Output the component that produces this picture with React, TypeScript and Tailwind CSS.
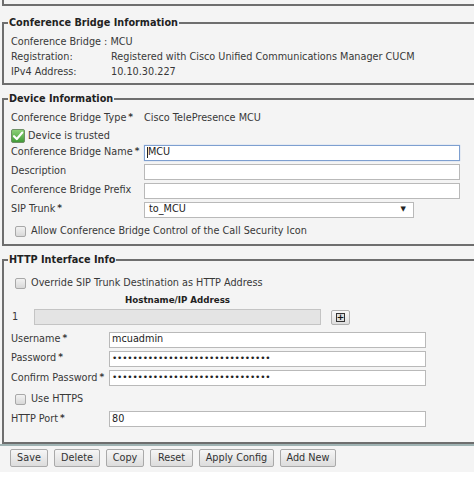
import React from 'react';

const font = { fontFamily: '"DejaVu Sans", Verdana, sans-serif' };

function Req() {
  return <sup className="ml-[2px] text-[9px] font-bold relative top-[-1px]">*</sup>;
}

function Box({ title, children, className = '' }: { title: string; children: React.ReactNode; className?: string }) {
  return (
    <fieldset className={`ml-[2px] w-[472px] border-2 border-r-0 border-[#6e6e6e] pl-[7px] ${className}`}>
      <legend className="-ml-[3px] px-[1px] text-[9.7px] leading-[13px] font-bold text-[#222]">{title}</legend>
      {children}
    </fieldset>
  );
}

function CheckBox() {
  return (
    <span className="inline-block w-[11px] h-[11px] rounded-[2px] border border-[#a8a8a8] bg-gradient-to-b from-[#f2f2f2] to-[#d8d8d8] ml-[4px] mr-[5px]" />
  );
}

function GreenCheck() {
  return (
    <svg width="14" height="14" viewBox="0 0 14 14" className="mr-[3px]">
      <defs>
        <linearGradient id="g" x1="0" y1="0" x2="0" y2="1">
          <stop offset="0" stopColor="#8fd37a" />
          <stop offset="1" stopColor="#3f9a35" />
        </linearGradient>
      </defs>
      <rect x="0.5" y="0.5" width="13" height="13" rx="1.5" fill="url(#g)" stroke="#6f8f66" />
      <path d="M3 7.2 L5.8 10 L11.2 3.6" fill="none" stroke="#fff" strokeWidth="2.2" strokeLinecap="round" strokeLinejoin="round" />
    </svg>
  );
}

function TextInput({ value = '', w, focus, password }: { value?: string; w: string; focus?: boolean; password?: boolean }) {
  return (
    <div
      className={`${w} h-[16px] bg-white border flex items-center px-[2px] ${
        focus ? 'border-[#7d9fd0] shadow-[0_0_1px_#9ab8e6]' : 'border-[#b9b9b9]'
      }`}
    >
      {focus && <span className="w-px h-[11px] bg-[#222]" />}
      <span className={password ? 'text-[9px] tracking-[-0.2px] text-[#222]' : 'text-[#222]'}>{value}</span>
    </div>
  );
}

const pw = '•••••••••••••••••••••••••••••••';

function Btn({ label, w }: { label: string; w: string }) {
  return (
    <button className={`${w} h-[18px] text-[9.7px] text-[#333] border border-[#a9a9a9] rounded-[2px] bg-gradient-to-b from-[#f6f6f6] to-[#dcdcdc] leading-none`}>
      {label}
    </button>
  );
}

export default function App() {
  return (
    <div className="w-[474px] h-[477px] overflow-hidden bg-white" style={font}>
      <div className="bg-[#f4f4f4] pb-[5px] text-[#383838] text-[9.7px]">
        {/* tail of the previous section */}
        <div className="ml-[2px] w-[472px] h-[6px] border-l-2 border-b-2 border-[#6e6e6e]" />

        <Box title="Conference Bridge Information" className="mt-[10px] pt-[6px] pb-[3px]">
          <div className="flex h-[15px] items-center">
            <span>Conference Bridge : MCU</span>
          </div>
          <div className="flex h-[15px] items-center">
            <span className="w-[100px]">Registration:</span>
            <span>Registered with Cisco Unified Communications Manager CUCM</span>
          </div>
          <div className="flex h-[15px] items-center">
            <span className="w-[100px]">IPv4 Address:</span>
            <span>10.10.30.227</span>
          </div>
        </Box>

        <Box title="Device Information" className="mt-[7px] pt-[5px] pb-[1px]">
          <div className="flex h-[16px] items-center">
            <span className="w-[133px]">
              Conference Bridge Type<Req />
            </span>
            <span>Cisco TelePresence MCU</span>
          </div>
          <div className="flex h-[17px] items-center pt-[3px]">
            <GreenCheck />
            <span>Device is trusted</span>
          </div>
          <div className="flex h-[19px] items-center">
            <span className="w-[133px]">
              Conference Bridge Name<Req />
            </span>
            <TextInput value="MCU" w="w-[316px]" focus />
          </div>
          <div className="flex h-[19px] items-center">
            <span className="w-[133px]">Description</span>
            <TextInput w="w-[316px]" />
          </div>
          <div className="flex h-[19px] items-center">
            <span className="w-[133px]">Conference Bridge Prefix</span>
            <TextInput w="w-[316px]" />
          </div>
          <div className="flex h-[19px] items-center">
            <span className="w-[133px]">
              SIP Trunk<Req />
            </span>
            <div className="w-[270px] h-[16px] bg-white border border-[#b9b9b9] flex items-center justify-between pl-[4px] pr-[7px]">
              <span className="text-[#222]">to_MCU</span>
              <span className="text-[7px] text-[#222]">▼</span>
            </div>
          </div>
          <div className="flex h-[24px] items-center">
            <CheckBox />
            <span>Allow Conference Bridge Control of the Call Security Icon</span>
          </div>
        </Box>

        <Box title="HTTP Interface Info" className="mt-[7px] pt-[8px] pb-[14px]">
          <div className="flex h-[18px] items-center">
            <CheckBox />
            <span>Override SIP Trunk Destination as HTTP Address</span>
          </div>
          <div className="flex h-[16px] items-center pt-[1px]">
            <span className="w-[287px] ml-[23px] text-center font-bold text-[8.7px] text-[#222]">Hostname/IP Address</span>
          </div>
          <div className="flex h-[18px] items-center">
            <span className="w-[23px] pl-[1px]">1</span>
            <div className="w-[287px] h-[16px] bg-[#e4e4e4] border border-[#c4c4c4]" />
            <div className="ml-[10px] w-[19px] h-[15px] border border-[#b0b0b0] rounded-[2px] bg-gradient-to-b from-[#f8f8f8] to-[#dedede] flex items-center justify-center">
              <span className="w-[9px] h-[9px] border border-[#333] bg-[#ddd] flex items-center justify-center text-[9px] leading-none font-bold text-[#111]">+</span>
            </div>
          </div>
          <div className="flex h-[19px] items-center mt-[4px]">
            <span className="w-[98px]">
              Username<Req />
            </span>
            <TextInput value="mcuadmin" w="w-[317px]" />
          </div>
          <div className="flex h-[19px] items-center">
            <span className="w-[98px]">
              Password<Req />
            </span>
            <TextInput value={pw} w="w-[317px]" password />
          </div>
          <div className="flex h-[20px] items-center">
            <span className="w-[98px]">
              Confirm Password<Req />
            </span>
            <TextInput value={pw} w="w-[317px]" password />
          </div>
          <div className="flex h-[22px] items-center">
            <CheckBox />
            <span>Use HTTPS</span>
          </div>
          <div className="flex h-[18px] items-center">
            <span className="w-[98px]">
              HTTP Port<Req />
            </span>
            <TextInput value="80" w="w-[317px]" />
          </div>
        </Box>

        <div className="border-t-2 border-[#9fb3b3]" />

        <div className="flex gap-[6px] pl-[10px] mt-[3px]">
          <Btn label="Save" w="w-[38px]" />
          <Btn label="Delete" w="w-[46px]" />
          <Btn label="Copy" w="w-[38px]" />
          <Btn label="Reset" w="w-[43px]" />
          <Btn label="Apply Config" w="w-[75px]" />
          <Btn label="Add New" w="w-[56px]" />
        </div>
      </div>
    </div>
  );
}
